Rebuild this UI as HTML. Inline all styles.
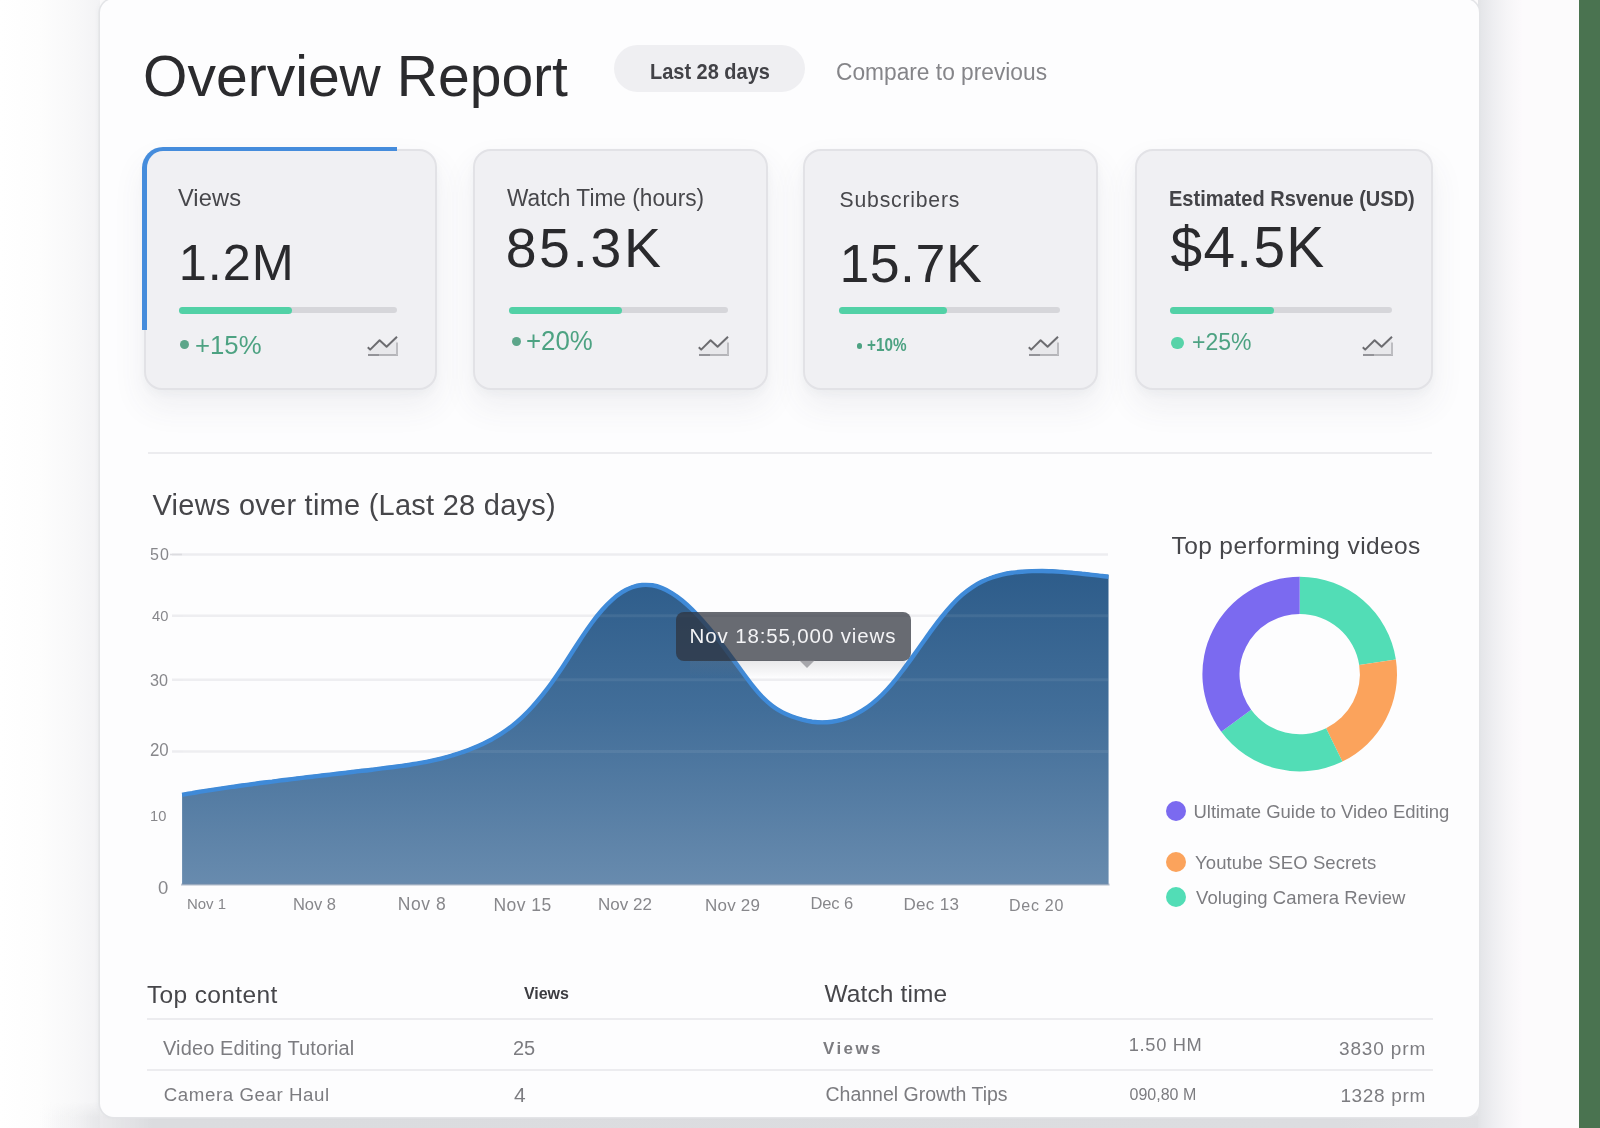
<!DOCTYPE html>
<html><head><meta charset="utf-8"><title>Overview Report</title>
<style>
html,body{margin:0;padding:0}
body{width:1600px;height:1128px;overflow:hidden;position:relative;background:#fcfbfc;font-family:"Liberation Sans", sans-serif;}
.bgl{position:absolute;left:0;top:0;width:100px;height:1128px;background:linear-gradient(90deg,#ffffff 0%,#fdfdfd 40%,#f8f8f9 75%,#f3f3f5 100%)}
.bgr{position:absolute;left:1478px;top:0;width:44px;height:1128px;background:linear-gradient(90deg,#e2e3e6 0%,#e6e7ea 10%,#eeeef1 35%,#f6f5f7 65%,#fcfafc 100%)}
.bgb{position:absolute;left:40px;top:1102px;width:1440px;height:26px;background:linear-gradient(90deg,rgba(219,220,223,0) 0%,rgba(219,220,223,0.22) 2.6%,rgba(219,220,223,0.55) 4.2%,#dbdcdf 7.8%,#dcdde0 90%,#e0e1e4 100%);-webkit-mask-image:linear-gradient(180deg,rgba(0,0,0,0) 0,#000 15px);mask-image:linear-gradient(180deg,rgba(0,0,0,0) 0,#000 15px);}
.green{position:absolute;left:1579px;top:0;width:21px;height:1128px;background:#4a7350}
.panel{position:absolute;left:99.6px;top:-1.5px;width:1379.8px;height:1118.8px;border-radius:14px;background:#fdfdfe;
 box-shadow:0 0 0 1.6px #e3e4e7, -2px 0 5px rgba(60,65,80,0.04);}
.tl{position:absolute;left:0;top:0;width:1600px;height:1128px;will-change:transform;}
.t{position:absolute;white-space:nowrap;line-height:1;}
.card{position:absolute;box-sizing:border-box;border-radius:18px;background:#f0f0f3;border:2.5px solid #e2e2e6;
 box-shadow:0 16px 32px 2px rgba(70,75,95,0.07), 0 4px 8px rgba(70,75,95,0.035);}
.pill{position:absolute;left:614px;top:44.8px;width:191px;height:47.2px;border-radius:23.6px;background:#efeff2;}
.bar{position:absolute;height:6px;border-radius:3px;background:#d6d6da;}
.barg{position:absolute;height:7px;border-radius:3.5px;background:#52d1a6;}
.dot{position:absolute;border-radius:50%;}
.ic{position:absolute;}
.hl{position:absolute;height:2.2px;background:#ececef;}
.chart{position:absolute;left:0;top:0;}
.blue{position:absolute;left:141.5px;top:146.5px;width:255px;height:183px;box-sizing:border-box;border-top:4.6px solid #458cdc;border-left:5.2px solid #458cdc;border-top-left-radius:21px;}
.blueclip{position:absolute;left:141.5px;top:146.5px;width:255px;height:183px;overflow:hidden}
.tip{position:absolute;left:676px;top:612px;width:235px;height:48.5px;border-radius:8px;background:rgba(46,50,60,0.72);}
.tipsh{position:absolute;left:690px;top:660px;width:215px;height:18px;background:linear-gradient(180deg,rgba(120,120,125,0.16),rgba(120,120,125,0));}
.tiparrow{position:absolute;left:799px;top:660px;width:0;height:0;border-left:8px solid transparent;border-right:8px solid transparent;border-top:8px solid rgba(120,120,126,0.6);}
</style></head><body>
<div class="bgl"></div>
<div class="bgb"></div>
<div class="bgr"></div>
<div class="green"></div>
<div class="panel"></div>
<div class="pill"></div>
<div class="card" style="left:143.8px;top:148.6px;width:293.6px;height:241.2px"></div>
<div class="card" style="left:473px;top:148.6px;width:295px;height:241.2px"></div>
<div class="card" style="left:802.6px;top:148.6px;width:295.6px;height:241.2px"></div>
<div class="card" style="left:1134.8px;top:148.6px;width:297.8px;height:241.2px"></div>
<div class="blue"></div>
<div class="bar" style="left:179.2px;top:307.3px;width:218.3px"></div><div class="barg" style="left:179.2px;top:306.8px;width:112.80000000000001px"></div>
<div class="bar" style="left:509.2px;top:307.3px;width:218.8px"></div><div class="barg" style="left:509.2px;top:306.8px;width:112.80000000000001px"></div>
<div class="bar" style="left:839.2px;top:307.3px;width:220.5px"></div><div class="barg" style="left:839.2px;top:306.8px;width:107.79999999999995px"></div>
<div class="bar" style="left:1170.3px;top:307.3px;width:221.70000000000005px"></div><div class="barg" style="left:1170.3px;top:306.8px;width:103.70000000000005px"></div>
<div class="dot" style="left:180.0px;top:339.9px;width:9px;height:9px;background:#5da68a"></div>
<div class="dot" style="left:511.5px;top:337.0px;width:9px;height:9px;background:#5da68a"></div>
<div class="dot" style="left:857.0px;top:343.4px;width:5.2px;height:5.2px;background:#4da282"></div>
<div class="dot" style="left:1171.3px;top:336.7px;width:12.4px;height:12.4px;background:#57d3a8"></div>
<div class="dot" style="left:1166.0px;top:801.0px;width:20px;height:20px;background:#7b6af0"></div>
<div class="dot" style="left:1166.0px;top:851.5px;width:20px;height:20px;background:#fba35c"></div>
<div class="dot" style="left:1166.0px;top:886.5px;width:20px;height:20px;background:#52ddb6"></div>
<svg class="ic" style="left:365.6px;top:334.8px" width="34" height="24" viewBox="0 0 34 24">
<path d="M2.2 12.6 L4.4 14.6 L13.6 5.2 L20.6 11.6 L31 1.8 L31 20 L2 20 Z" fill="#e8e8eb"/>
<path d="M2 20 H32" stroke="#b2b2b6" stroke-width="1.9" fill="none"/>
<path d="M2 20 H13" stroke="#929296" stroke-width="1.9" fill="none"/>
<path d="M31 7.5 V20" stroke="#bdbdc1" stroke-width="2" fill="none"/>
<path d="M1.8 12.2 L4.2 14.6 L13.6 5.2 L20.6 11.8 L31 1.8" stroke="#6c6c70" stroke-width="2" fill="none" stroke-linejoin="round" stroke-linecap="butt"/>
</svg>
<svg class="ic" style="left:697.4px;top:334.8px" width="34" height="24" viewBox="0 0 34 24">
<path d="M2.2 12.6 L4.4 14.6 L13.6 5.2 L20.6 11.6 L31 1.8 L31 20 L2 20 Z" fill="#e8e8eb"/>
<path d="M2 20 H32" stroke="#b2b2b6" stroke-width="1.9" fill="none"/>
<path d="M2 20 H13" stroke="#929296" stroke-width="1.9" fill="none"/>
<path d="M31 7.5 V20" stroke="#bdbdc1" stroke-width="2" fill="none"/>
<path d="M1.8 12.2 L4.2 14.6 L13.6 5.2 L20.6 11.8 L31 1.8" stroke="#6c6c70" stroke-width="2" fill="none" stroke-linejoin="round" stroke-linecap="butt"/>
</svg>
<svg class="ic" style="left:1027px;top:334.8px" width="34" height="24" viewBox="0 0 34 24">
<path d="M2.2 12.6 L4.4 14.6 L13.6 5.2 L20.6 11.6 L31 1.8 L31 20 L2 20 Z" fill="#e8e8eb"/>
<path d="M2 20 H32" stroke="#b2b2b6" stroke-width="1.9" fill="none"/>
<path d="M2 20 H13" stroke="#929296" stroke-width="1.9" fill="none"/>
<path d="M31 7.5 V20" stroke="#bdbdc1" stroke-width="2" fill="none"/>
<path d="M1.8 12.2 L4.2 14.6 L13.6 5.2 L20.6 11.8 L31 1.8" stroke="#6c6c70" stroke-width="2" fill="none" stroke-linejoin="round" stroke-linecap="butt"/>
</svg>
<svg class="ic" style="left:1361.4px;top:334.8px" width="34" height="24" viewBox="0 0 34 24">
<path d="M2.2 12.6 L4.4 14.6 L13.6 5.2 L20.6 11.6 L31 1.8 L31 20 L2 20 Z" fill="#e8e8eb"/>
<path d="M2 20 H32" stroke="#b2b2b6" stroke-width="1.9" fill="none"/>
<path d="M2 20 H13" stroke="#929296" stroke-width="1.9" fill="none"/>
<path d="M31 7.5 V20" stroke="#bdbdc1" stroke-width="2" fill="none"/>
<path d="M1.8 12.2 L4.2 14.6 L13.6 5.2 L20.6 11.8 L31 1.8" stroke="#6c6c70" stroke-width="2" fill="none" stroke-linejoin="round" stroke-linecap="butt"/>
</svg>
<div class="hl" style="left:148px;top:452px;width:1284px"></div>
<svg class="chart" width="1600" height="1128" viewBox="0 0 1600 1128">
<defs><linearGradient id="ag" gradientUnits="userSpaceOnUse" x1="0" y1="570" x2="0" y2="885">
<stop offset="0" stop-color="#2d5c8a"/><stop offset="0.45" stop-color="#426e99"/><stop offset="1" stop-color="#688bae"/></linearGradient></defs>
<line x1="172" y1="554.5" x2="1108" y2="554.5" stroke="#ededf0" stroke-width="2.4"/><line x1="172" y1="615.8" x2="1108" y2="615.8" stroke="#ededf0" stroke-width="2.4"/><line x1="172" y1="679.7" x2="1108" y2="679.7" stroke="#ededf0" stroke-width="2.4"/><line x1="172" y1="751.5" x2="1108" y2="751.5" stroke="#ededf0" stroke-width="2.4"/><line x1="170" y1="554.5" x2="182" y2="554.5" stroke="#dcdce0" stroke-width="1.6"/>
<path d="M182.1 793.1 C183.8 792.8 188.8 791.9 192.1 791.4 C195.4 790.8 198.8 790.3 202.1 789.7 C205.4 789.2 208.8 788.7 212.1 788.2 C215.4 787.7 218.8 787.2 222.1 786.7 C225.4 786.2 228.8 785.7 232.1 785.2 C235.4 784.7 238.8 784.3 242.1 783.8 C245.4 783.4 248.8 782.9 252.1 782.5 C255.4 782.0 258.8 781.6 262.1 781.1 C265.4 780.7 268.8 780.3 272.1 779.9 C275.4 779.4 278.8 779.0 282.1 778.6 C285.4 778.2 288.8 777.8 292.1 777.4 C295.4 777.0 298.8 776.6 302.1 776.2 C305.4 775.8 308.8 775.4 312.1 775.0 C315.4 774.6 318.8 774.2 322.1 773.8 C325.4 773.4 328.8 773.1 332.1 772.7 C335.4 772.3 338.8 771.9 342.1 771.5 C345.4 771.1 348.8 770.7 352.1 770.3 C355.4 769.9 358.8 769.5 362.1 769.1 C365.4 768.8 368.8 768.4 372.1 768.0 C375.4 767.6 378.8 767.2 382.1 766.7 C385.4 766.3 388.8 765.9 392.1 765.5 C395.4 765.1 398.8 764.6 402.1 764.2 C405.4 763.7 408.8 763.2 412.1 762.6 C415.4 762.1 418.8 761.5 422.1 760.9 C425.4 760.3 428.8 759.6 432.1 758.9 C435.4 758.2 438.8 757.4 442.1 756.6 C445.4 755.7 448.8 754.8 452.1 753.8 C455.4 752.8 458.8 751.8 462.1 750.6 C465.4 749.4 468.8 748.2 472.1 746.8 C475.4 745.5 478.8 744.1 482.1 742.5 C485.4 740.9 488.8 739.3 492.1 737.5 C495.4 735.6 498.8 733.7 502.1 731.5 C505.4 729.3 508.8 726.9 512.1 724.3 C515.4 721.7 518.8 718.8 522.1 715.7 C525.4 712.5 528.8 709.1 532.1 705.4 C535.4 701.8 538.8 697.8 542.1 693.7 C545.4 689.5 548.8 685.1 552.1 680.5 C555.4 675.9 558.8 671.0 562.1 666.1 C565.4 661.1 568.8 655.8 572.1 650.6 C575.4 645.5 578.8 640.2 582.1 635.2 C585.4 630.2 588.8 625.3 592.1 620.8 C595.4 616.3 598.8 612.1 602.1 608.3 C605.4 604.5 608.8 601.0 612.1 598.1 C615.4 595.1 618.8 592.6 622.1 590.5 C625.4 588.4 628.8 586.8 632.1 585.6 C635.4 584.4 638.8 583.6 642.1 583.3 C645.4 583.0 648.8 583.1 652.1 583.6 C655.4 584.1 658.8 585.1 662.1 586.4 C665.4 587.7 668.8 589.5 672.1 591.6 C675.4 593.6 678.8 596.1 682.1 598.8 C685.4 601.5 688.8 604.6 692.1 607.8 C695.4 611.1 698.8 614.7 702.1 618.4 C705.4 622.1 708.8 626.1 712.1 630.2 C715.4 634.3 718.8 638.6 722.1 642.9 C725.4 647.3 728.8 651.9 732.1 656.4 C735.4 660.9 738.8 665.5 742.1 670.0 C745.4 674.5 748.8 679.2 752.1 683.4 C755.4 687.5 758.8 691.7 762.1 695.1 C765.4 698.6 768.8 701.5 772.1 704.0 C775.4 706.6 778.8 708.6 782.1 710.4 C785.4 712.2 788.8 713.5 792.1 714.8 C795.4 716.1 798.8 717.1 802.1 718.0 C805.4 718.8 808.8 719.5 812.1 720.0 C815.4 720.4 818.8 720.7 822.1 720.7 C825.4 720.7 828.8 720.5 832.1 720.0 C835.4 719.6 838.8 718.9 842.1 718.0 C845.4 717.0 848.8 715.8 852.1 714.3 C855.4 712.8 858.8 711.0 862.1 709.0 C865.4 706.9 868.8 704.6 872.1 701.9 C875.4 699.2 878.8 696.3 882.1 693.0 C885.4 689.7 888.8 686.0 892.1 682.1 C895.4 678.2 898.8 673.9 902.1 669.5 C905.4 665.2 908.8 660.5 912.1 655.9 C915.4 651.3 918.8 646.5 922.1 641.8 C925.4 637.2 928.8 632.4 932.1 627.9 C935.4 623.4 938.8 618.9 942.1 614.8 C945.4 610.6 948.8 606.6 952.1 603.0 C955.4 599.4 958.8 596.1 962.1 593.2 C965.4 590.3 968.8 587.8 972.1 585.6 C975.4 583.4 978.8 581.5 982.1 579.9 C985.4 578.3 988.8 576.9 992.1 575.8 C995.4 574.6 998.8 573.7 1002.1 572.9 C1005.4 572.2 1008.8 571.6 1012.1 571.1 C1015.4 570.6 1018.8 570.3 1022.1 570.0 C1025.4 569.7 1028.8 569.5 1032.1 569.4 C1035.4 569.3 1038.8 569.3 1042.1 569.3 C1045.4 569.3 1048.8 569.5 1052.1 569.6 C1055.4 569.8 1058.8 570.0 1062.1 570.2 C1065.4 570.5 1068.8 570.8 1072.1 571.1 C1075.4 571.4 1078.8 571.7 1082.1 572.1 C1085.4 572.4 1088.8 572.8 1092.1 573.2 C1095.4 573.6 1099.4 574.0 1102.1 574.3 C1104.8 574.6 1107.4 574.9 1108.5 575.0 L1108.6 884.6 L182.1 884.6 Z" fill="url(#ag)"/>
<line x1="183" y1="615.8" x2="1108" y2="615.8" stroke="#ffffff" stroke-opacity="0.07" stroke-width="3"/><line x1="183" y1="679.7" x2="1108" y2="679.7" stroke="#ffffff" stroke-opacity="0.07" stroke-width="3"/><line x1="183" y1="751.5" x2="1108" y2="751.5" stroke="#ffffff" stroke-opacity="0.07" stroke-width="3"/>
<path d="M182.1 794.8 C183.8 794.5 188.8 793.6 192.1 793.1 C195.4 792.5 198.8 792.0 202.1 791.4 C205.4 790.9 208.8 790.4 212.1 789.9 C215.4 789.4 218.8 788.9 222.1 788.4 C225.4 787.9 228.8 787.4 232.1 786.9 C235.4 786.4 238.8 786.0 242.1 785.5 C245.4 785.1 248.8 784.6 252.1 784.2 C255.4 783.7 258.8 783.3 262.1 782.8 C265.4 782.4 268.8 782.0 272.1 781.6 C275.4 781.1 278.8 780.7 282.1 780.3 C285.4 779.9 288.8 779.5 292.1 779.1 C295.4 778.7 298.8 778.3 302.1 777.9 C305.4 777.5 308.8 777.1 312.1 776.7 C315.4 776.3 318.8 775.9 322.1 775.5 C325.4 775.1 328.8 774.8 332.1 774.4 C335.4 774.0 338.8 773.6 342.1 773.2 C345.4 772.8 348.8 772.4 352.1 772.0 C355.4 771.6 358.8 771.2 362.1 770.8 C365.4 770.5 368.8 770.1 372.1 769.7 C375.4 769.3 378.8 768.9 382.1 768.4 C385.4 768.0 388.8 767.6 392.1 767.2 C395.4 766.8 398.8 766.3 402.1 765.9 C405.4 765.4 408.8 764.9 412.1 764.3 C415.4 763.8 418.8 763.2 422.1 762.6 C425.4 762.0 428.8 761.3 432.1 760.6 C435.4 759.9 438.8 759.1 442.1 758.3 C445.4 757.4 448.8 756.5 452.1 755.5 C455.4 754.5 458.8 753.5 462.1 752.3 C465.4 751.1 468.8 749.9 472.1 748.5 C475.4 747.2 478.8 745.8 482.1 744.2 C485.4 742.6 488.8 741.0 492.1 739.2 C495.4 737.3 498.8 735.4 502.1 733.2 C505.4 731.0 508.8 728.6 512.1 726.0 C515.4 723.4 518.8 720.5 522.1 717.4 C525.4 714.2 528.8 710.8 532.1 707.1 C535.4 703.5 538.8 699.5 542.1 695.4 C545.4 691.2 548.8 686.8 552.1 682.2 C555.4 677.6 558.8 672.7 562.1 667.8 C565.4 662.8 568.8 657.5 572.1 652.3 C575.4 647.2 578.8 641.9 582.1 636.9 C585.4 631.9 588.8 627.0 592.1 622.5 C595.4 618.0 598.8 613.8 602.1 610.0 C605.4 606.2 608.8 602.7 612.1 599.8 C615.4 596.8 618.8 594.3 622.1 592.2 C625.4 590.1 628.8 588.5 632.1 587.3 C635.4 586.1 638.8 585.3 642.1 585.0 C645.4 584.7 648.8 584.8 652.1 585.3 C655.4 585.8 658.8 586.8 662.1 588.1 C665.4 589.4 668.8 591.2 672.1 593.3 C675.4 595.3 678.8 597.8 682.1 600.5 C685.4 603.2 688.8 606.3 692.1 609.5 C695.4 612.8 698.8 616.4 702.1 620.1 C705.4 623.8 708.8 627.8 712.1 631.9 C715.4 636.0 718.8 640.3 722.1 644.6 C725.4 649.0 728.8 653.6 732.1 658.1 C735.4 662.6 738.8 667.2 742.1 671.7 C745.4 676.2 748.8 680.9 752.1 685.1 C755.4 689.2 758.8 693.4 762.1 696.8 C765.4 700.3 768.8 703.2 772.1 705.7 C775.4 708.3 778.8 710.3 782.1 712.1 C785.4 713.9 788.8 715.2 792.1 716.5 C795.4 717.8 798.8 718.8 802.1 719.7 C805.4 720.5 808.8 721.2 812.1 721.7 C815.4 722.1 818.8 722.4 822.1 722.4 C825.4 722.4 828.8 722.2 832.1 721.7 C835.4 721.3 838.8 720.6 842.1 719.7 C845.4 718.7 848.8 717.5 852.1 716.0 C855.4 714.5 858.8 712.7 862.1 710.7 C865.4 708.6 868.8 706.3 872.1 703.6 C875.4 700.9 878.8 698.0 882.1 694.7 C885.4 691.4 888.8 687.7 892.1 683.8 C895.4 679.9 898.8 675.6 902.1 671.2 C905.4 666.9 908.8 662.2 912.1 657.6 C915.4 653.0 918.8 648.2 922.1 643.5 C925.4 638.9 928.8 634.1 932.1 629.6 C935.4 625.1 938.8 620.6 942.1 616.5 C945.4 612.3 948.8 608.3 952.1 604.7 C955.4 601.1 958.8 597.8 962.1 594.9 C965.4 592.0 968.8 589.5 972.1 587.3 C975.4 585.1 978.8 583.2 982.1 581.6 C985.4 580.0 988.8 578.6 992.1 577.5 C995.4 576.3 998.8 575.4 1002.1 574.6 C1005.4 573.9 1008.8 573.3 1012.1 572.8 C1015.4 572.3 1018.8 572.0 1022.1 571.7 C1025.4 571.4 1028.8 571.2 1032.1 571.1 C1035.4 571.0 1038.8 571.0 1042.1 571.0 C1045.4 571.0 1048.8 571.2 1052.1 571.3 C1055.4 571.5 1058.8 571.7 1062.1 571.9 C1065.4 572.2 1068.8 572.5 1072.1 572.8 C1075.4 573.1 1078.8 573.4 1082.1 573.8 C1085.4 574.1 1088.8 574.5 1092.1 574.9 C1095.4 575.3 1099.4 575.7 1102.1 576.0 C1104.8 576.3 1107.4 576.6 1108.5 576.7" fill="none" stroke="#3f8ad8" stroke-width="4.4" stroke-linecap="butt" stroke-linejoin="round"/>
<rect x="181" y="883.6" width="928.6" height="2" fill="#7d8fa8" opacity="0.5"/>
<path d="M1299.70 576.80 A97.3 97.3 0 0 1 1395.88 659.38 L1359.21 664.99 A60.2 60.2 0 0 0 1299.70 613.90 Z" fill="#52ddb6"/><path d="M1395.88 659.38 A97.3 97.3 0 0 1 1342.35 761.55 L1326.09 728.21 A60.2 60.2 0 0 0 1359.21 664.99 Z" fill="#fba35c"/><path d="M1342.35 761.55 A97.3 97.3 0 0 1 1221.28 731.70 L1251.18 709.74 A60.2 60.2 0 0 0 1326.09 728.21 Z" fill="#52ddb6"/><path d="M1221.28 731.70 A97.3 97.3 0 0 1 1299.70 576.80 L1299.70 613.90 A60.2 60.2 0 0 0 1251.18 709.74 Z" fill="#7b6af0"/>
</svg>
<div class="tipsh"></div>
<div class="tip"></div>
<div class="tiparrow"></div>
<div class="hl" style="left:147px;top:1018px;width:1285.5px"></div>
<div class="hl" style="left:147px;top:1069px;width:1285.5px"></div>
<div class="tl">
<div class="t" style="left:142.5px;top:47.6px;font-size:57.5px;color:#2b2b2e;transform:scaleX(0.9925);transform-origin:0 0;">Overview Report</div>
<div class="t" style="left:650.0px;top:61.5px;font-size:21.5px;color:#424247;font-weight:700;transform:scaleX(0.9288);transform-origin:0 0;">Last 28 days</div>
<div class="t" style="left:835.8px;top:61.2px;font-size:23.3px;color:#858589;transform:scaleX(0.9758);transform-origin:0 0;">Compare to previous</div>
<div class="t" style="left:177.9px;top:187.4px;font-size:23.7px;color:#47474b;letter-spacing:0.10px;">Views</div>
<div class="t" style="left:178.7px;top:238.2px;font-size:50.4px;color:#2a2a2d;letter-spacing:0.98px;">1.2M</div>
<div class="t" style="left:195.0px;top:331.9px;font-size:26.3px;color:#4da282;transform:scaleX(0.9789);transform-origin:0 0;">+15%</div>
<div class="t" style="left:506.8px;top:187.0px;font-size:23.3px;color:#47474b;transform:scaleX(0.9741);transform-origin:0 0;">Watch Time (hours)</div>
<div class="t" style="left:505.7px;top:220.8px;font-size:55.4px;color:#2a2a2d;letter-spacing:2.62px;">85.3K</div>
<div class="t" style="left:525.8px;top:328.2px;font-size:27px;color:#4da282;transform:scaleX(0.9564);transform-origin:0 0;">+20%</div>
<div class="t" style="left:839.6px;top:189.1px;font-size:21.2px;color:#47474b;letter-spacing:0.79px;">Subscribers</div>
<div class="t" style="left:839.4px;top:236.8px;font-size:53.7px;color:#2a2a2d;letter-spacing:0.50px;">15.7K</div>
<div class="t" style="left:867.0px;top:336.0px;font-size:18px;color:#4da282;font-weight:700;transform:scaleX(0.8489);transform-origin:0 0;">+10%</div>
<div class="t" style="left:1168.7px;top:187.7px;font-size:21.8px;color:#434347;font-weight:700;transform:scaleX(0.9181);transform-origin:0 0;">Estimated Rsvenue (USD)</div>
<div class="t" style="left:1170.6px;top:219.8px;font-size:56.8px;color:#2a2a2d;letter-spacing:1.29px;">$4.5K</div>
<div class="t" style="left:1192.0px;top:330.0px;font-size:24px;color:#4da282;transform:scaleX(0.9586);transform-origin:0 0;">+25%</div>
<div class="t" style="left:152.5px;top:490.5px;font-size:29px;color:#46464a;letter-spacing:0.25px;">Views over time (Last 28 days)</div>
<div class="t" style="left:150.0px;top:546.8px;font-size:16px;color:#87878b;letter-spacing:1.10px;">50</div>
<div class="t" style="left:151.5px;top:607.9px;font-size:15px;color:#87878b;transform:scaleX(0.9791);transform-origin:0 0;">40</div>
<div class="t" style="left:150.0px;top:672.3px;font-size:16.5px;color:#87878b;transform:scaleX(0.9793);transform-origin:0 0;">30</div>
<div class="t" style="left:150.0px;top:741.8px;font-size:17.5px;color:#87878b;transform:scaleX(0.9629);transform-origin:0 0;">20</div>
<div class="t" style="left:150.0px;top:807.8px;font-size:15px;color:#87878b;transform:scaleX(0.9777);transform-origin:0 0;">10</div>
<div class="t" style="left:158.0px;top:878.5px;font-size:18.5px;color:#87878b;">0</div>
<div class="t" style="left:186.5px;top:896.4px;font-size:15.5px;color:#87878b;transform:scaleX(0.9647);transform-origin:0 0;">Nov 1</div>
<div class="t" style="left:293.0px;top:896.0px;font-size:16.5px;color:#87878b;letter-spacing:-0.06px;">Nov 8</div>
<div class="t" style="left:397.8px;top:895.6px;font-size:17.5px;color:#87878b;letter-spacing:0.55px;">Nov 8</div>
<div class="t" style="left:493.5px;top:897.2px;font-size:17.5px;color:#87878b;letter-spacing:0.46px;">Nov 15</div>
<div class="t" style="left:598.0px;top:895.6px;font-size:17px;color:#87878b;">Nov 22</div>
<div class="t" style="left:705.0px;top:896.6px;font-size:17px;color:#87878b;letter-spacing:0.22px;">Nov 29</div>
<div class="t" style="left:810.5px;top:895.0px;font-size:16.5px;color:#87878b;letter-spacing:-0.11px;">Dec 6</div>
<div class="t" style="left:903.5px;top:895.6px;font-size:17px;color:#87878b;letter-spacing:0.32px;">Dec 13</div>
<div class="t" style="left:1009.0px;top:897.7px;font-size:16px;color:#87878b;letter-spacing:0.74px;">Dec 20</div>
<div class="t" style="left:689.5px;top:625.6px;font-size:20.5px;color:#f4f4f6;letter-spacing:0.87px;">Nov 18:55,000 views</div>
<div class="t" style="left:1171.5px;top:534.3px;font-size:24.5px;color:#46464a;letter-spacing:0.39px;">Top performing videos</div>
<div class="t" style="left:1193.5px;top:803.3px;font-size:18.5px;color:#7c7c80;letter-spacing:-0.03px;">Ultimate Guide to Video Editing</div>
<div class="t" style="left:1195.0px;top:853.8px;font-size:18.5px;color:#7c7c80;letter-spacing:0.11px;">Youtube SEO Secrets</div>
<div class="t" style="left:1196.0px;top:888.8px;font-size:18.5px;color:#7c7c80;letter-spacing:0.08px;">Voluging Camera Review</div>
<div class="t" style="left:147.0px;top:982.8px;font-size:24.5px;color:#46464a;letter-spacing:0.36px;">Top content</div>
<div class="t" style="left:524.0px;top:986.0px;font-size:16px;color:#3c3c41;letter-spacing:-0.04px;font-weight:700;">Views</div>
<div class="t" style="left:824.5px;top:981.8px;font-size:24.5px;color:#46464a;letter-spacing:0.11px;">Watch time</div>
<div class="t" style="left:163.0px;top:1037.6px;font-size:20px;color:#7c7c80;letter-spacing:0.12px;">Video Editing Tutorial</div>
<div class="t" style="left:513.0px;top:1037.6px;font-size:20px;color:#7c7c80;letter-spacing:-0.12px;">25</div>
<div class="t" style="left:823.0px;top:1039.6px;font-size:17px;color:#7c7c80;letter-spacing:2.39px;font-weight:700;">Views</div>
<div class="t" style="left:1128.8px;top:1036.1px;font-size:18.3px;color:#7c7c80;letter-spacing:0.66px;">1.50 HM</div>
<div class="t" style="left:1339.0px;top:1038.5px;font-size:19px;color:#7c7c80;letter-spacing:0.85px;">3830 prm</div>
<div class="t" style="left:163.8px;top:1085.8px;font-size:18.7px;color:#7c7c80;letter-spacing:0.57px;">Camera Gear Haul</div>
<div class="t" style="left:514.0px;top:1084.2px;font-size:21px;color:#7c7c80;">4</div>
<div class="t" style="left:825.5px;top:1085.0px;font-size:19.5px;color:#7c7c80;">Channel Growth Tips</div>
<div class="t" style="left:1129.5px;top:1087.0px;font-size:16px;color:#7c7c80;">090,80 M</div>
<div class="t" style="left:1340.4px;top:1086.3px;font-size:19px;color:#7c7c80;letter-spacing:0.65px;">1328 prm</div>
</div>
</body></html>
